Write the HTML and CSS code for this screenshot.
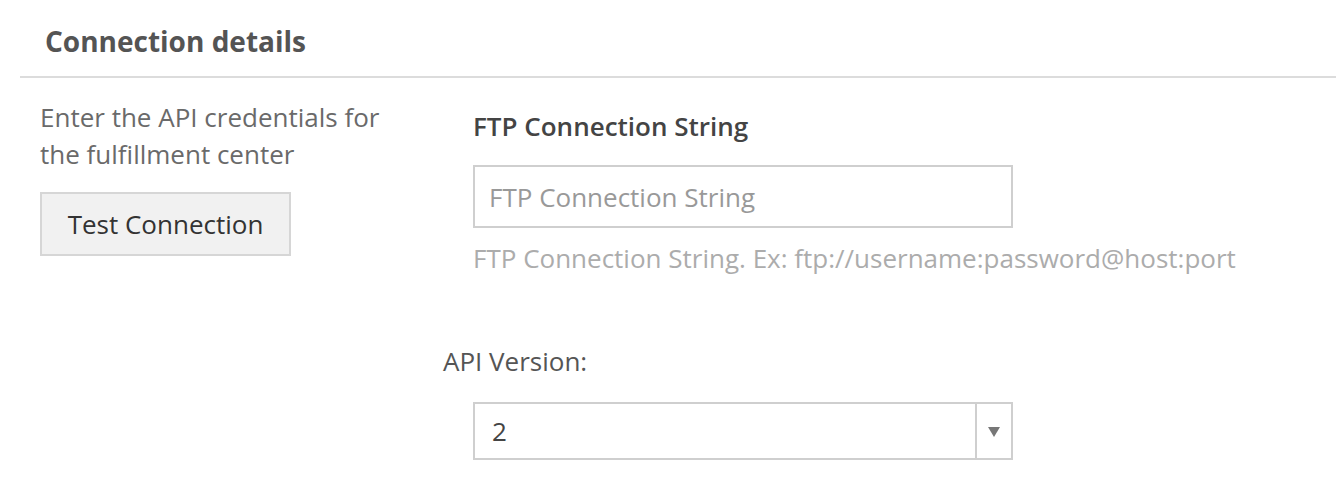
FILE: index.html
```html
<!DOCTYPE html>
<html>
<head>
<meta charset="utf-8">
<link rel="stylesheet" href="styles.css">
</head>
<body>
<section class="panel">
  <h2 class="panel-title">Connection details</h2>
  <div class="panel-body">
    <div class="intro">
      <p class="intro-text">Enter the API credentials for the fulfillment center</p>
      <button class="btn" type="button">Test Connection</button>
    </div>
    <div class="fields">
      <div class="group group-indent">
        <label class="field-label" for="ftp">FTP Connection String</label>
        <input class="text-input" id="ftp" type="text" placeholder="FTP Connection String">
        <p class="help">FTP Connection String. Ex: ftp://username:password@host:port</p>
      </div>
      <div class="group group-api">
        <div class="plain-label">API Version:</div>
        <div class="select">
          <span class="select-value">2</span>
          <span class="select-arrow"><span class="caret"></span></span>
        </div>
      </div>
    </div>
  </div>
</section>
</body>
</html>
```
FILE: styles.css
```css
* { box-sizing: border-box; }
html, body { margin: 0; padding: 0; background: #fff; }
body {
  font-family: "Open Sans", "Noto Sans", "Liberation Sans", sans-serif;
  color: #555;
}
.panel { margin-left: 20px; }
.panel-title {
  margin: 22px 0 0 0;
  padding: 0 0 16px 25px;
  font-size: 28px;
  font-weight: 700;
  line-height: 38px;
  color: #545454;
  border-bottom: 2px solid #dcdcdc;
}
.panel-body {
  display: grid;
  grid-template-columns: 403px 1fr;
  padding-left: 20px;
}
.intro { padding-top: 21px; }
.intro-text {
  margin: 0;
  font-size: 26px;
  line-height: 37px;
  color: #6a6a6a;
  width: 360px;
}
.btn {
  margin-top: 19px;
  display: block;
  width: 251px;
  height: 64px;
  padding: 0;
  font-family: inherit;
  font-size: 26px;
  line-height: 35px;
  color: #333;
  background: #f1f1f1;
  border: 2px solid #d6d6d6;
  border-radius: 0;
}
.fields { padding-top: 31px; }
.group-indent { padding-left: 30px; }
.field-label {
  display: block;
  font-size: 26px;
  font-weight: 600;
  line-height: 35px;
  color: #444;
}
.text-input {
  display: block;
  margin-top: 21px;
  width: 540px;
  height: 63px;
  padding: 0 14px;
  font-family: inherit;
  font-size: 26px;
  color: #444;
  border: 2px solid #cfcfcf;
  border-radius: 0;
  outline: none;
}
.text-input::placeholder { color: #999; }
.help {
  margin: 13px 0 0 0;
  font-size: 26px;
  line-height: 35px;
  color: #acacac;
}
.group-api { margin-top: 68px; }
.plain-label {
  font-size: 26px;
  line-height: 35px;
  color: #555;
}
.select {
  margin: 23px 0 0 30px;
  width: 540px;
  height: 58px;
  display: flex;
  border: 2px solid #cfcfcf;
}
.select-value {
  flex: 1;
  padding: 1px 17px 0 17px;
  font-size: 26px;
  line-height: 53px;
  color: #444;
}
.select-arrow {
  width: 36px;
  border-left: 2px solid #cfcfcf;
  display: flex;
  align-items: center;
  justify-content: center;
}
.caret {
  width: 0;
  height: 0;
  border-left: 6px solid transparent;
  border-right: 6px solid transparent;
  border-top: 10px solid #777;
  margin-top: 2px;
}
```
